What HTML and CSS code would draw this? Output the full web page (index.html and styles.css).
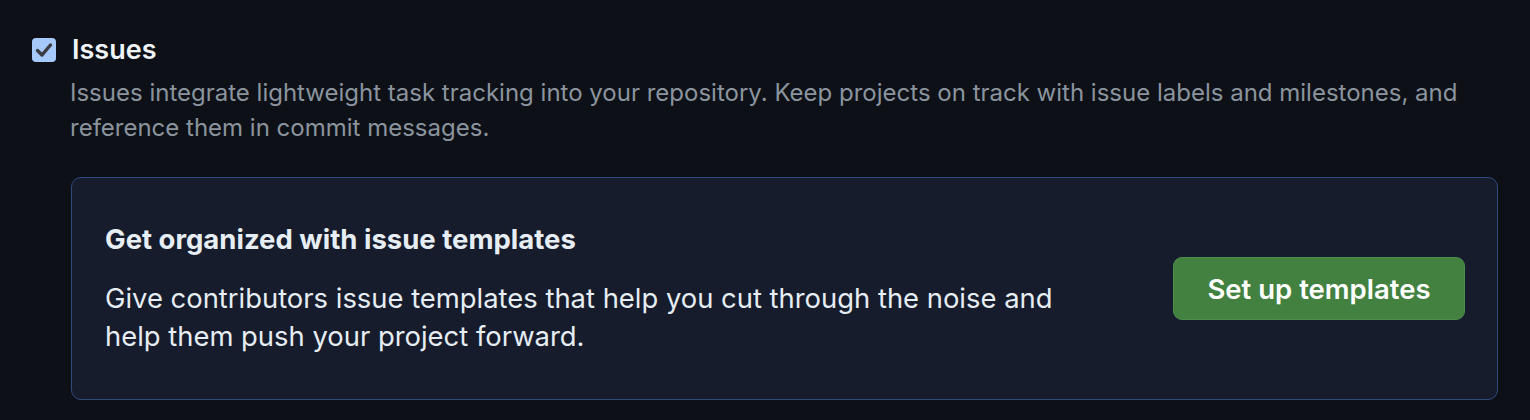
FILE: index.html
```html
<!DOCTYPE html>
<html lang="en">
<head>
<meta charset="utf-8">
<link rel="stylesheet" href="styles.css">
</head>
<body>
<div class="page">
  <div class="feature">
    <div class="feature-head">
      <span class="checkbox">
        <svg width="24" height="24" viewBox="0 0 24 24"><rect x="0" y="0" width="24" height="24" rx="4" fill="#a6c9fc"/><path d="M5.5 12.5 L10 17 L18.5 7" fill="none" stroke="#3b3d42" stroke-width="3.4" stroke-linecap="round" stroke-linejoin="round"/></svg>
      </span>
      <span class="feature-title">Issues</span>
    </div>
    <p class="feature-desc">Issues integrate lightweight task tracking into your repository. Keep projects on track with issue labels and milestones, and reference them in commit messages.</p>
    <div class="promo">
      <div class="promo-text">
        <h3 class="promo-title">Get organized with issue templates</h3>
        <p class="promo-body">Give contributors issue templates that help you cut through the noise and help them push your project forward.</p>
      </div>
      <button class="btn-primary">Set up templates</button>
    </div>
  </div>
</div>
</body>
</html>
```

FILE: styles.css
```css
html, body {
  margin: 0;
  padding: 0;
  background: #0d1117;
}
body {
  font-family: Inter, "Noto Sans", "Liberation Sans", sans-serif;
  color: #e6edf3;
}
.page {
  padding: 38px 32px 0 32px;
}
.feature-head {
  display: flex;
  align-items: center;
  gap: 16px;
  height: 24px;
}
.checkbox {
  display: flex;
  width: 24px;
  height: 24px;
}
.feature-title {
  font-size: 27px;
  font-weight: 600;
  color: #f0f3f6;
  line-height: 24px;
}
.feature-desc {
  margin: 13px 0 0 38px;
  font-size: 24px;
  line-height: 35px;
  color: #8b949e;
  max-width: 1420px;
}
.promo {
  margin: 32px 0 0 39px;
  width: 1427px;
  height: 223px;
  box-sizing: border-box;
  border: 1px solid #2f4b7e;
  border-radius: 10px;
  background: #161c2c;
  display: flex;
  align-items: center;
  justify-content: space-between;
  padding: 0 32px 0 33px;
}
.promo-title {
  margin: 0;
  font-size: 27.5px;
  line-height: 33px;
  font-weight: 700;
  color: #e6edf3;
}
.promo-body {
  margin: 23px 0 0 0;
  font-size: 27.4px;
  line-height: 38px;
  color: #e6edf3;
  max-width: 1000px;
}
.btn-primary {
  width: 292px;
  height: 63px;
  border-radius: 9px;
  border: 1px solid #4d8f4c;
  background: #428140;
  color: #ffffff;
  font-family: inherit;
  font-size: 27.5px;
  font-weight: 600;
  padding: 0;
  flex-shrink: 0;
}
```
